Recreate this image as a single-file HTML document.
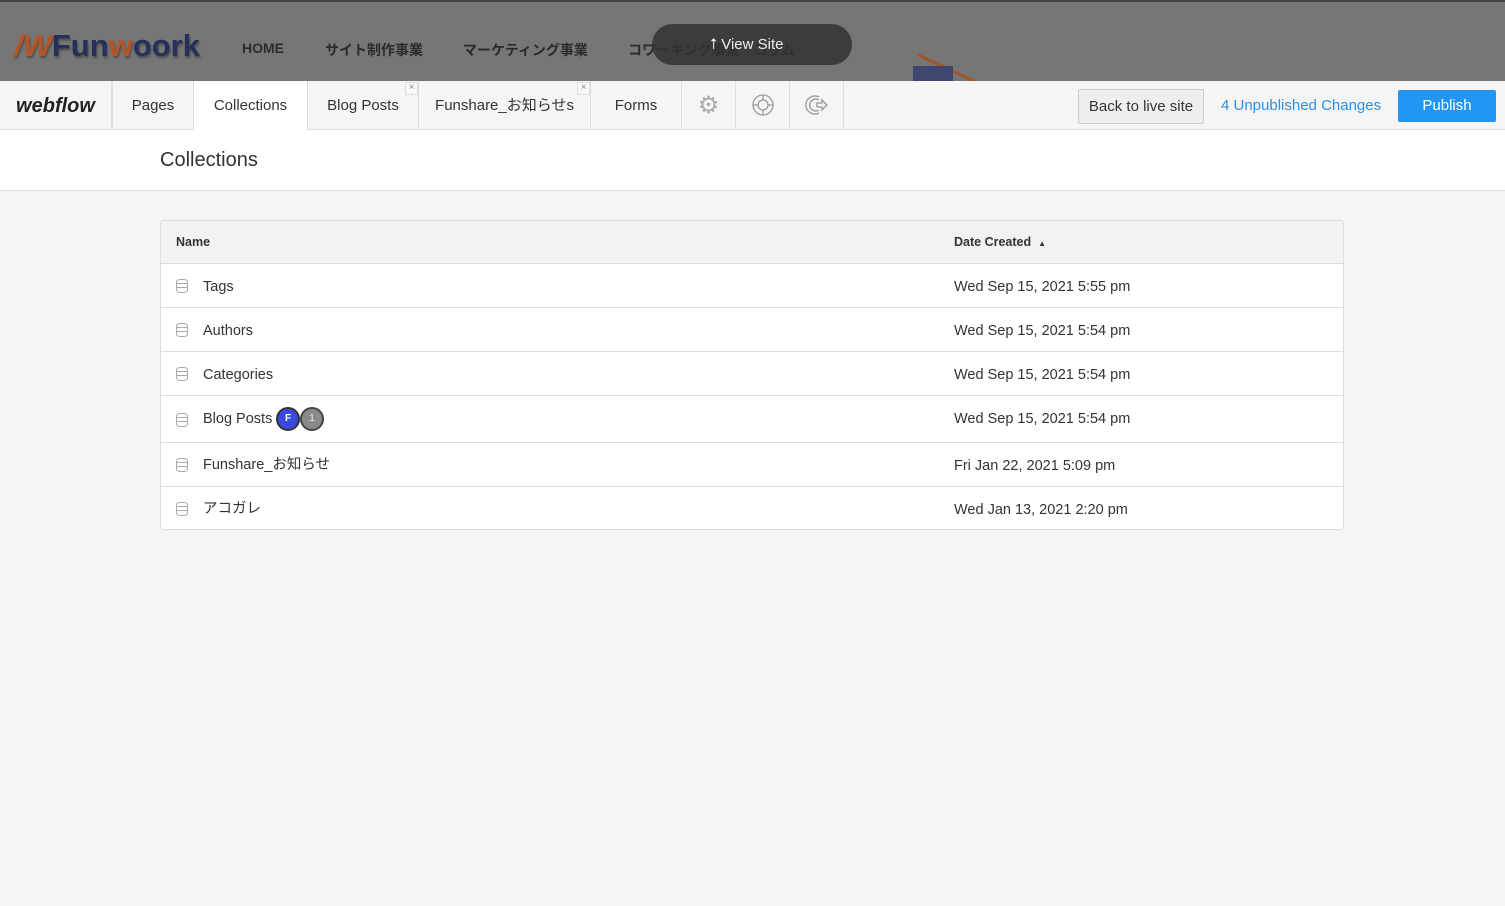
<!DOCTYPE html>
<html><head><meta charset="utf-8"><style>
*{box-sizing:border-box;margin:0;padding:0}
body{width:1505px;height:906px;overflow:hidden;background:#f5f5f5;font-family:"Liberation Sans","Noto Sans CJK JP",sans-serif;position:relative}
.site{position:absolute;left:0;top:0;width:1505px;height:81px;background:#767676;border-top:2px solid #444}
.logo{position:absolute;left:14px;top:26px;font-size:31px;font-weight:bold;color:#27305a;text-shadow:1px 2px 2px rgba(0,0,0,.35)}
.nav{position:absolute;top:38px;font-size:14px;font-weight:bold;color:#2b2b2b}
.vs{position:absolute;left:652px;top:22px;width:200px;height:41px;border-radius:21px;background:rgba(50,50,50,.85);color:#eee;font-size:15px;line-height:41px;padding-left:58px}
.bar{position:absolute;left:0;top:81px;width:1505px;height:49px;background:#f5f5f5;border-bottom:1px solid #ddd}
.tab{position:absolute;top:0;height:48px;border-right:1px solid #ddd;font-size:15px;color:#333;line-height:50px;text-align:center}
.x{position:absolute;top:1px;right:0;width:13px;height:13px;border:1px solid #ddd;background:#f8f8f8;font-size:10px;line-height:10px;color:#888}
.hdr{position:absolute;left:0;top:130px;width:1505px;height:61px;background:#fff;border-bottom:1px solid #ddd}
.hdr span{position:absolute;left:160px;top:19px;font-size:20px;color:#333}
.tbl{position:absolute;left:160px;top:220px;width:1184px;border:1px solid #ddd;border-radius:3px;background:#fff}
.row{position:relative;height:44px;border-top:1px solid #ddd;font-size:14.5px;color:#333;line-height:43px}
.row .n{position:absolute;left:42px;top:2px}
.row .d{position:absolute;left:793px;top:2px}
.ic{position:absolute;left:15px;top:15px;width:12px;height:14px;border:1.5px solid #aaa;border-radius:4px/3px}
.ic:before,.ic:after{content:"";position:absolute;left:0;right:0;border-top:1px solid #aaa}
.ic:before{top:3px}.ic:after{top:7px}
.th{height:42px;background:#f2f2f2;font-size:12.5px;font-weight:bold;color:#333;position:relative}
</style></head><body>
<div class="site">
<div class="logo"><span style="color:#b4562a;font-style:italic">/W</span>Fun<span style="color:#b4562a">w</span>oork</div>
<div class="nav" style="left:242px">HOME</div>
<div class="nav" style="left:325px">サイト制作事業</div>
<div class="nav" style="left:463px">マーケティング事業</div>
<div class="nav" style="left:628px">コワーキング事業　コラム</div>
<div style="position:absolute;left:912px;top:50px;width:80px;height:30px;border-top:3px solid #a3552e;transform:rotate(25deg);transform-origin:left"></div>
<div style="position:absolute;left:913px;top:64px;width:40px;height:17px;background:#3f4670"></div>
<div class="vs">⭡ View Site</div>
</div>
<div class="bar">
<div class="tab" style="left:0;width:112px;font-weight:bold;font-style:italic;font-size:20px;color:#222">webflow</div>
<div class="tab" style="left:112px;width:82px;border-left:1px solid #ddd">Pages</div>
<div class="tab" style="left:194px;width:114px;background:#fff;height:49px">Collections</div>
<div class="tab" style="left:308px;width:111px">Blog Posts<div class="x">×</div></div>
<div class="tab" style="left:419px;width:172px">Funshare_お知らせs<div class="x">×</div></div>
<div class="tab" style="left:591px;width:91px">Forms</div>
<div class="tab" style="left:682px;width:54px;font-size:24px;color:#aaa">⚙</div>
<div class="tab" style="left:736px;width:54px"><svg width="24" height="24" viewBox="0 0 24 24" style="margin-top:12px" fill="none" stroke="#999" stroke-width="1.3"><circle cx="12" cy="12" r="10"/><circle cx="12" cy="12" r="5"/><path d="M12 2v5M12 17v5M2 12h5M17 12h5"/></svg></div>
<div class="tab" style="left:790px;width:54px"><svg width="24" height="24" viewBox="0 0 24 24" style="margin-top:12px" fill="none" stroke="#999" stroke-width="1.3"><path d="M14 4a9 9 0 1 0 0 16M14 7a6 6 0 1 0 0 10M12 10h5V7l5 5-5 5v-3h-5z"/></svg></div>
<div style="position:absolute;left:1078px;top:8px;width:126px;height:35px;border:1px solid #ccc;border-radius:2px;background:#eee;font-size:15px;color:#333;line-height:33px;text-align:center">Back to live site</div>
<div style="position:absolute;left:1221px;top:16px;font-size:15px;color:#2d8fe6">4 Unpublished Changes</div>
<div style="position:absolute;left:1398px;top:9px;width:98px;height:32px;border-radius:2px;background:#2196f3;color:#fff;font-size:15px;line-height:32px;text-align:center">Publish</div>
</div>
<div class="hdr"><span>Collections</span></div>
<div class="tbl">
<div class="th"><span style="position:absolute;left:15px;top:14px">Name</span><span style="position:absolute;left:793px;top:14px">Date Created &nbsp;<span style="font-size:8px">▲</span></span></div>
<div class="row"><i class="ic"></i><span class="n">Tags</span><span class="d">Wed Sep 15, 2021 5:55 pm</span></div>
<div class="row"><i class="ic"></i><span class="n">Authors</span><span class="d">Wed Sep 15, 2021 5:54 pm</span></div>
<div class="row"><i class="ic"></i><span class="n">Categories</span><span class="d">Wed Sep 15, 2021 5:54 pm</span></div>
<div class="row" style="height:47px;line-height:46px"><i class="ic" style="top:17px"></i><span class="n" style="top:0">Blog Posts</span>
<span style="position:absolute;left:139px;top:11px;width:24px;height:24px;border-radius:50%;background:#8a8a8a;border:2px solid #444;color:#eee;font-size:10px;text-align:center;line-height:20px">1</span>
<span style="position:absolute;left:115px;top:11px;width:24px;height:24px;border-radius:50%;background:#3b48e0;border:2px solid #333;color:#fff;font-size:10px;font-weight:bold;text-align:center;line-height:20px">F</span>
<span class="d" style="top:0">Wed Sep 15, 2021 5:54 pm</span></div>
<div class="row"><i class="ic"></i><span class="n" style="top:1px">Funshare_お知らせ</span><span class="d">Fri Jan 22, 2021 5:09 pm</span></div>
<div class="row" style="height:43px;line-height:42px"><i class="ic"></i><span class="n" style="top:1px">アコガレ</span><span class="d">Wed Jan 13, 2021 2:20 pm</span></div>
</div>
</body></html>
